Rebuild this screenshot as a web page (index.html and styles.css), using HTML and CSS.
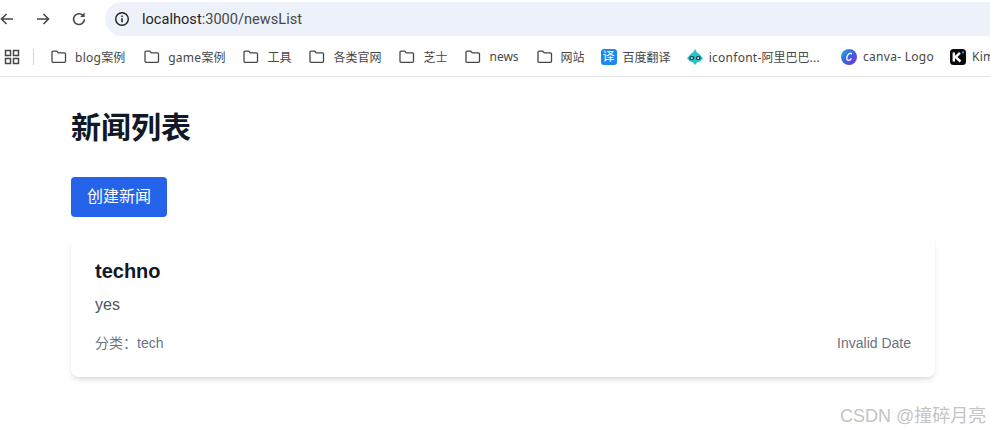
FILE: index.html
```html
<!DOCTYPE html>
<html lang="zh-CN">
<head>
<meta charset="utf-8">
<title>新闻列表</title>
<link rel="stylesheet" href="styles.css">
</head>
<body>
<svg class="defs" width="0" height="0" aria-hidden="true"><defs>
<symbol id="folder" viewBox="0 0 16 16"><path d="M1 3.200a1 1 0 0 1 1-1h3.800l1.600 1.700h6.100a1 1 0 0 1 1 1v7.400a1 1 0 0 1-1 1H2a1 1 0 0 1-1-1z" fill="none" stroke="#474747" stroke-width="1.300"/></symbol>
</defs></svg>
<header class="chrome">
  <div class="toolbar">
    <svg class="nav back" width="16" height="16" viewBox="0 0 16 16"><path d="M14 8H2.500M7.500 3L2.500 8l5 5" fill="none" stroke="#474747" stroke-width="1.600"/></svg>
    <svg class="nav forward" width="16" height="16" viewBox="0 0 16 16"><path d="M2 8h11.500M8.500 3l5 5-5 5" fill="none" stroke="#474747" stroke-width="1.600"/></svg>
    <svg class="nav reload" width="16" height="16" viewBox="0 0 16 16"><path d="M13.400 8.200A5.400 5.400 0 1 1 11.800 4.300" fill="none" stroke="#474747" stroke-width="1.600"/><path d="M13.600 1.600v4.400H9.200z" fill="#474747"/></svg>
    <div class="omnibox">
      <svg class="info" width="16" height="16" viewBox="0 0 16 16"><circle cx="8" cy="8" r="6.300" fill="none" stroke="#1f1f1f" stroke-width="1.400"/><path d="M8 7.200v4M8 4.600v1.400" stroke="#1f1f1f" stroke-width="1.500"/></svg>
      <span class="url"><span class="host">localhost</span>:3000/newsList</span>
    </div>
  </div>
  <nav class="bookmarks">
    <svg class="apps" width="16" height="16" viewBox="0 0 16 16"><path d="M1.500 1.500h5v5h-5zM9.500 1.500h5v5h-5zM1.500 9.500h5v5h-5zM9.500 9.500h5v5h-5z" fill="none" stroke="#474747" stroke-width="1.500"/></svg>
    <span class="sep"></span>
    <a class="mark first-folder"><svg width="16" height="16"><use href="#folder"/></svg><span><span class="lat">blog</span>案例</span></a>
    <a class="mark"><svg width="16" height="16"><use href="#folder"/></svg><span><span class="lat">game</span>案例</span></a>
    <a class="mark"><svg width="16" height="16"><use href="#folder"/></svg>工具</a>
    <a class="mark"><svg width="16" height="16"><use href="#folder"/></svg>各类官网</a>
    <a class="mark"><svg width="16" height="16"><use href="#folder"/></svg>芝士</a>
    <a class="mark"><svg width="16" height="16"><use href="#folder"/></svg>news</a>
    <a class="mark last-folder"><svg width="16" height="16"><use href="#folder"/></svg>网站</a>
    <a class="mark site"><span class="fanyi">译</span>百度翻译</a>
    <a class="mark site long"><svg width="16" height="16" viewBox="0 0 16 16"><path d="M8 0l1.800 3.200 2.800 2 3.400 4-2.800 3.400-3 .6L8 16l-2.200-2.800-3-.6L0 9.200l3.400-4 2.800-2z" fill="#21c7cf"/><ellipse cx="4.800" cy="9" rx="2.500" ry="2.100" fill="#26303a"/><ellipse cx="11.200" cy="9" rx="2.500" ry="2.100" fill="#26303a"/><circle cx="4.800" cy="9" r="1.100" fill="#d8f5f2"/><circle cx="11.200" cy="9" r="1.100" fill="#d8f5f2"/></svg><span><span class="lat">iconfont-</span>阿里巴巴<span class="lat">...</span></span></a>
    <a class="mark site"><svg width="16" height="16" viewBox="0 0 16 16"><defs><linearGradient id="cv" x1="0" y1="0" x2="1" y2="1"><stop offset="0" stop-color="#1bb5d8"/><stop offset=".5" stop-color="#3f5fe0"/><stop offset="1" stop-color="#7a2fe0"/></linearGradient></defs><circle cx="8" cy="8" r="8" fill="url(#cv)"/><path d="M10.800 5.300C10.300 3.700 8.200 4 6.900 5.800 5.500 7.800 5.200 10.800 7 11.300c1.300.3 2.700-.8 3.400-2" fill="none" stroke="#fff" stroke-width="1.300"/></svg><span class="lat">canva- Logo</span></a>
    <a class="mark site"><svg width="16" height="16" viewBox="0 0 16 16"><rect width="16" height="16" rx="3.500" fill="#0a0a0a"/><path d="M3.800 3.500v9M10 3.800L5.500 8l5 4.500" fill="none" stroke="#fff" stroke-width="2.400"/><circle cx="13" cy="3.400" r="1.100" fill="#2a8cff"/></svg><span class="lat">Kimi</span></a>
  </nav>
</header>
<main class="page">
  <h1 class="title">新闻列表</h1>
  <button class="create" type="button">创建新闻</button>
  <article class="card">
    <h2 class="card-title">techno</h2>
    <p class="card-body">yes</p>
    <footer class="card-meta"><span>分类：tech</span><span>Invalid Date</span></footer>
  </article>
</main>
<div class="watermark">CSDN @撞碎月亮</div>
</body>
</html>
```
FILE: styles.css
```css
* { box-sizing: border-box; }
html, body { margin: 0; height: 100%; overflow: hidden; background: #fff; }
body { width: 990px; height: 433px; position: relative; font-family: "Liberation Sans", "Noto Sans CJK SC", sans-serif; }
.defs { position: absolute; }
.chrome { height: 77px; border-bottom: 1px solid #e3e3e3; overflow: hidden; }
.toolbar { height: 36px; padding-top: 2px; display: flex; align-items: center; }
.nav { flex: none; }
.back { margin-left: -1px; }
.forward { margin-left: 20px; }
.reload { margin-left: 20px; }
.omnibox { flex: 1; height: 34px; margin-left: 18px; margin-right: -30px; padding-left: 9px; display: flex; align-items: center; gap: 12px; background: #edf2fa; border-radius: 17px; }
.info { flex: none; }
.url { font-family: "Roboto", "Liberation Sans", sans-serif; font-size: 14.600px; color: #474747; white-space: nowrap; }
.host { color: #1f1f1f; }
.bookmarks { height: 40px; padding: 1px 0 0 4px; display: flex; align-items: center; white-space: nowrap; font-family: "Noto Sans", "Noto Sans CJK SC", sans-serif; font-size: 12px; color: #474747; }
.apps { flex: none; }
.sep { flex: none; width: 1px; height: 16px; margin: 0 17px 0 13px; background: #c3d8f5; }
.mark { flex: none; display: flex; align-items: center; gap: 8px; margin-right: 18px; }
.mark svg { flex: none; }
.lat { letter-spacing: .27px; }
.first-folder { margin-right: 19px; }
.last-folder { margin-right: 16px; }
.mark.site { gap: 6px; margin-right: 16px; }
.mark.long { margin-right: 21px; }
.fanyi { flex: none; width: 16px; height: 16px; border-radius: 3px; background: #1e88f0; color: #fff; font-size: 12px; line-height: 16px; text-align: center; }
.page { width: 864px; margin-left: 71px; }
.title { margin: 0; padding-top: 30px; height: 100px; font-size: 30px; line-height: 42px; font-weight: 700; color: #111827; }
.create { display: block; width: 96px; height: 40px; padding: 0; border: 0; border-radius: 4px; background: #2563eb; color: #fff; font: 16px/24px "Liberation Sans", "Noto Sans CJK SC", sans-serif; }
.card { margin-top: 20px; height: 140px; padding: 24px; border-radius: 8px; background: #fff; box-shadow: 0 4px 6px -1px rgba(0,0,0,.1), 0 2px 4px -2px rgba(0,0,0,.1); }
.card-title { margin: 0 0 12px; font-size: 20px; line-height: 20px; font-weight: 700; color: #111827; }
.card-body { margin: 0 0 16px; font-size: 16px; line-height: 24px; color: #4b5563; }
.card-meta { display: flex; justify-content: space-between; font-size: 14px; line-height: 20px; color: #6b7280; }
.watermark { position: absolute; left: 840px; top: 404px; font-size: 18px; line-height: 24px; color: #c4c4c4; white-space: nowrap; }
```
